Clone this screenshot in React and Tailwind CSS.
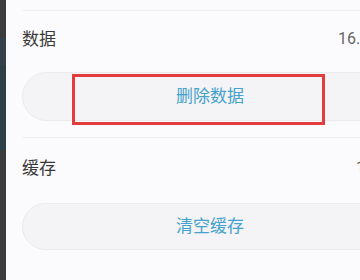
export default function App() {
  const font = { fontFamily: 'Roboto, "Noto Sans CJK SC", sans-serif' }
  return (
    <div className="w-[360px] h-[280px] overflow-hidden flex bg-[#fbfafc]" style={font}>
      {/* sliver of the window behind */}
      <div className="w-[6px] shrink-0 flex flex-col">
        <div className="h-[38px] bg-[#3c3c3c]" />
        <div className="h-[27px] bg-[#34404c]" />
        <div className="h-[85px] bg-[#2e4047]" />
        <div className="flex-1 bg-[#3b3b3b]" />
      </div>

      <div className="relative w-[414px] shrink-0 pl-[16px] pr-[14px]">
        <div className="mt-[10px] h-px bg-[#f0eff2]" />

        <div className="pt-[16px] flex items-center justify-between leading-[24px]">
          <span className="text-[17px] text-[#3a3a3a]">数据</span>
          <span className="text-[16px] text-[#666666]">16.61 MB</span>
        </div>
        <button className="mt-[21px] mr-[8px] w-[376px] h-[49px] rounded-full bg-[#f4f3f5] border border-[#ebeaec] flex items-center justify-center text-[17px] text-[#44a2cc]">
          删除数据
        </button>

        <div className="mt-[16px] mr-[8px] h-px bg-[#f0eff2]" />

        <div className="pt-[18px] flex items-center justify-between leading-[24px]">
          <span className="text-[17px] text-[#3a3a3a]">缓存</span>
          <span className="text-[16px] text-[#666666]">1.8 MB</span>
        </div>
        <button className="mt-[23px] w-[376px] h-[47px] rounded-full bg-[#f4f3f5] border border-[#ebeaec] flex items-center justify-center text-[17px] text-[#44a2cc]">
          清空缓存
        </button>

        {/* annotation box */}
        <div className="absolute left-[66px] top-[74px] w-[253px] h-[51px] border-[3px] border-[#e23c3c] pointer-events-none" />
      </div>
    </div>
  )
}
